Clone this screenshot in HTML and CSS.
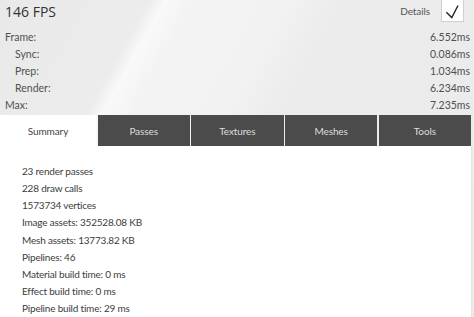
FILE: index.html
```html
<!DOCTYPE html>
<html>
<head>
<meta charset="utf-8">
<link rel="stylesheet" href="styles.css">
</head>
<body>
<div class="page">
  <div class="header">
    <div class="title">146 FPS</div>
    <div class="details">
      <span class="details-label">Details</span>
      <span class="checkbox">
        <svg width="23" height="23" viewBox="0 0 23 23"><path d="M5.3 13.2 L10.8 18.6 L17 6.5" fill="none" stroke="#222" stroke-width="1.4"/></svg>
      </span>
    </div>
  </div>
  <div class="stats">
    <div class="row"><span>Frame:</span><span>6.552ms</span></div>
    <div class="row sub"><span>Sync:</span><span>0.086ms</span></div>
    <div class="row sub"><span>Prep:</span><span>1.034ms</span></div>
    <div class="row sub"><span>Render:</span><span>6.234ms</span></div>
    <div class="row"><span>Max:</span><span>7.235ms</span></div>
  </div>
  <div class="tabs">
    <div class="tab active">Summary</div>
    <div class="tab">Passes</div>
    <div class="tab">Textures</div>
    <div class="tab">Meshes</div>
    <div class="tab">Tools</div>
  </div>
  <div class="panel">
    <div class="line">23 render passes</div>
    <div class="line">228 draw calls</div>
    <div class="line">1573734 vertices</div>
    <div class="line">Image assets: 352528.08 KB</div>
    <div class="line">Mesh assets: 13773.82 KB</div>
    <div class="line">Pipelines: 46</div>
    <div class="line">Material build time: 0 ms</div>
    <div class="line">Effect build time: 0 ms</div>
    <div class="line">Pipeline build time: 29 ms</div>
  </div>
</div>
</body>
</html>
```

FILE: styles.css
```css
html, body {
  margin: 0;
  padding: 0;
}
body {
  width: 474px;
  height: 317px;
  overflow: hidden;
  font-family: Lato, "Open Sans", sans-serif;
  color: #444;
  background: linear-gradient(119deg, #e9e9e9 0%, #ececec 23%, #f9f9f9 25.5%, #f3f3f3 30%, #f2f2f2 44%, #ececec 52%, #ebebeb 100%);
}
.page {
  display: flex;
  flex-direction: column;
  height: 317px;
}
.header {
  display: flex;
  justify-content: space-between;
  align-items: flex-start;
  height: 21px;
}
.title {
  font-family: "Open Sans", sans-serif;
  font-size: 14px;
  line-height: 23px;
  padding-left: 5px;
  color: #333;
}
.details {
  display: flex;
  align-items: center;
  gap: 11px;
  padding-right: 10px;
}
.details-label {
  font-size: 10px;
  letter-spacing: -0.1px;
  color: #555;
  line-height: 22px;
}
.checkbox {
  display: block;
  width: 23px;
  height: 23px;
  margin-top: -2px;
  box-sizing: border-box;
  border: 1px solid #d0d0d0;
  background: #fff;
  position: relative;
}
.checkbox svg {
  position: absolute;
  left: -1px;
  top: -1px;
}
.stats {
  margin-top: 8px;
  padding: 0 4px 0 5px;
}
.row {
  display: flex;
  justify-content: space-between;
  font-size: 10.5px;
  line-height: 17px;
  height: 17px;
  color: #505050;
}
.row.sub span:first-child {
  padding-left: 10px;
}
.tabs {
  margin-top: 1px;
  display: grid;
  grid-template-columns: 96px 1fr 1fr 1fr 1fr;
  column-gap: 1.5px;
  width: 471px;
  height: 32px;
}
.tab {
  background: #4b4b4b;
  color: #ddd;
  font-size: 10px;
  letter-spacing: -0.1px;
  display: flex;
  align-items: center;
  justify-content: center;
}
.tab.active {
  background: #fff;
  color: #444;
}
.panel {
  flex: 1;
  background: #fff;
  border-right: 1.5px solid #e4e4e4;
  padding: 17px 0 0 22px;
  box-sizing: border-box;
  width: 471.5px;
}
.line {
  font-size: 10px;
  letter-spacing: -0.2px;
  line-height: 17.1px;
  height: 17.1px;
  color: #3c3c3c;
}
```
